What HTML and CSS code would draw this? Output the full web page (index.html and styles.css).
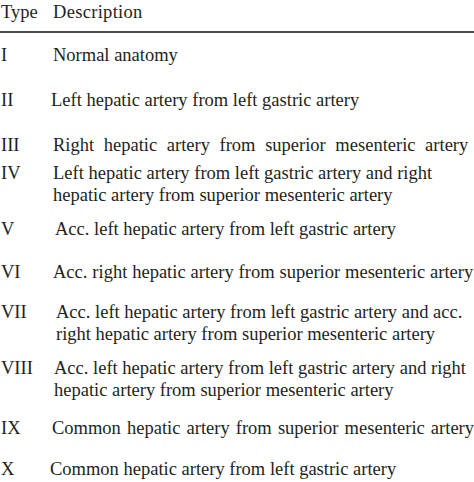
FILE: index.html
```html
<!DOCTYPE html>
<html>
<head>
<meta charset="utf-8">
<link rel="stylesheet" href="styles.css">
</head>
<body>
<div class="table">
  <div class="row head"><div class="type">Type</div><div class="desc">Description</div></div>
  <div class="rule"></div>
  <div class="row g10"><div class="type">I</div><div class="desc">Normal anatomy</div></div>
  <div class="row g23"><div class="type">II</div><div class="desc l2">Left hepatic artery from left gastric artery</div></div>
  <div class="row g23"><div class="type">III</div><div class="desc ws5">Right hepatic artery from superior mesenteric artery</div></div>
  <div class="row g6"><div class="type">IV</div><div class="desc">Left hepatic artery from left gastric artery and right<br>hepatic artery from superior mesenteric artery</div></div>
  <div class="row g12"><div class="type">V</div><div class="desc r2">Acc. left hepatic artery from left gastric artery</div></div>
  <div class="row g21"><div class="type">VI</div><div class="desc ws04">Acc. right hepatic artery from superior mesenteric artery</div></div>
  <div class="row g18"><div class="type">VII</div><div class="desc r3">Acc. left hepatic artery from left gastric artery and acc.<br>right hepatic artery from superior mesenteric artery</div></div>
  <div class="row g12"><div class="type">VIII</div><div class="desc r1">Acc. left hepatic artery from left gastric artery and right<br>hepatic artery from superior mesenteric artery</div></div>
  <div class="row g16"><div class="type">IX</div><div class="desc l1 ws15">Common hepatic artery from superior mesenteric artery</div></div>
  <div class="row g19"><div class="type">X</div><div class="desc l3">Common hepatic artery from left gastric artery</div></div>
</div>
</body>
</html>
```
FILE: styles.css
```css
html, body {
  margin: 0;
  padding: 0;
  background: #ffffff;
  overflow: hidden;
}
.table {
  display: flex;
  flex-direction: column;
  padding-top: 1px;
  font-family: "Liberation Serif", "Times New Roman", serif;
  font-size: 18.5px;
  line-height: 22px;
  color: #231f20;
}
.row {
  display: flex;
  white-space: nowrap;
}
.type {
  flex: 0 0 53px;
  padding-left: 1px;
  box-sizing: border-box;
}
.desc {
  flex: 1 1 auto;
}
.rule {
  margin-top: 8px;
  height: 2px;
  background: #4a4a4a;
}
.head .desc {
  letter-spacing: 0.3px;
}
.g6 { margin-top: 6px; }
.g10 { margin-top: 11px; }
.g12 { margin-top: 12px; }
.g16 { margin-top: 16px; }
.g18 { margin-top: 18px; }
.g19 { margin-top: 19px; }
.g21 { margin-top: 21px; }
.g23 { margin-top: 23px; }
.l1 { margin-left: -1px; }
.l2 { margin-left: -2px; }
.l3 { margin-left: -3px; }
.r1 { margin-left: 1px; }
.r2 { margin-left: 2px; }
.r3 { margin-left: 3px; }
.ws04 { word-spacing: 0.3px; }
.ws15 { word-spacing: 1.5px; }
.ws5 { word-spacing: 5px; }
```
